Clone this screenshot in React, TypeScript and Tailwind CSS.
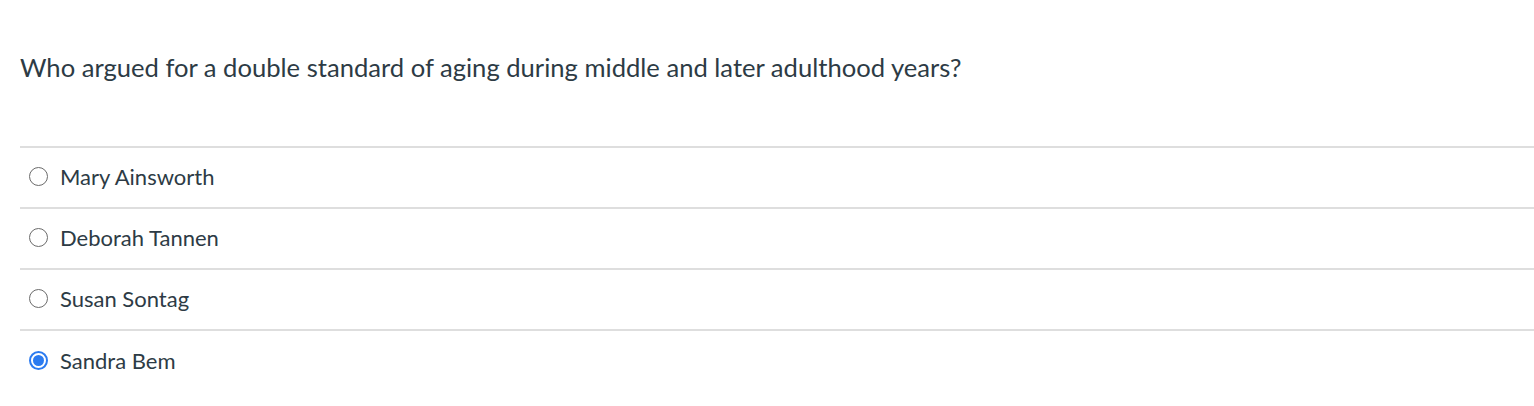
import React from 'react';

const answers = [
  { label: 'Mary Ainsworth', checked: false },
  { label: 'Deborah Tannen', checked: false },
  { label: 'Susan Sontag', checked: false },
  { label: 'Sandra Bem', checked: true },
];

const Radio = ({ checked }: { checked: boolean }) =>
  checked ? (
    <span className="w-[19px] h-[19px] rounded-full border-2 border-[#2b7bf0] flex items-center justify-center shrink-0">
      <span className="w-[11px] h-[11px] rounded-full bg-[#2b7bf0]" />
    </span>
  ) : (
    <span className="w-[19px] h-[19px] rounded-full border-[1.5px] border-[#6b6b6b] shrink-0" />
  );

const App = () => {
  return (
    <div className="w-[1534px] h-[406px] bg-white text-[#2d3b45] font-['Lato','Noto_Sans',sans-serif] pl-[20px]">
      <p className="pt-[50px] text-[25.6px] leading-[34px]">
        Who argued for a double standard of aging during middle and later adulthood years?
      </p>

      <div className="mt-[62px] border-t-2 border-[#dedede]">
        {answers.map((a, i) => (
          <div
            key={i}
            className={`flex items-center gap-[12px] pl-[9px] pb-[2px] text-[22px] ${
              i < answers.length - 1 ? 'h-[61px] border-b-2 border-[#dedede]' : 'h-[60px]'
            }`}
          >
            <Radio checked={a.checked} />
            <span>{a.label}</span>
          </div>
        ))}
      </div>
    </div>
  );
};

export default App;
